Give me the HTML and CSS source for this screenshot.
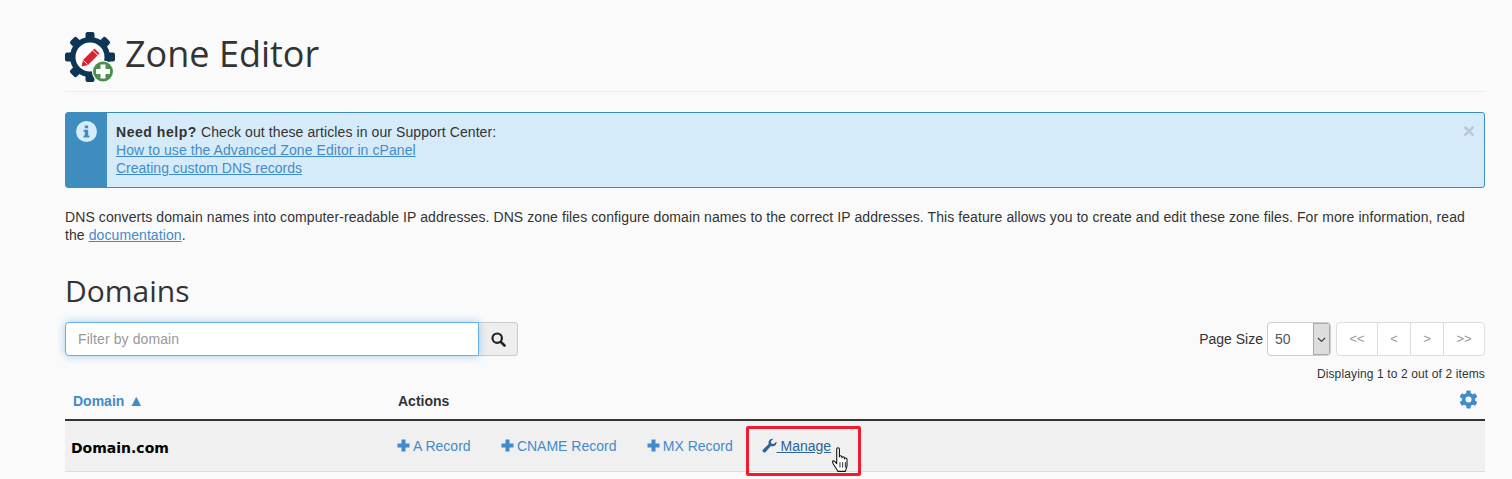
FILE: index.html
```html
<!DOCTYPE html>
<html lang="en">
<head>
    <meta charset="UTF-8">
    <title>Zone Editor</title>
    <link rel="stylesheet" href="styles.css">
</head>
<body>
    <div class="page">
        <div class="pageHead">
            <svg class="appIcon" width="50" height="52" viewBox="0 0 50 52">
                <g fill="#0f3555">
                    <circle cx="25" cy="25" r="20"/>
                    <rect x="20.500" y="0" width="9" height="9" rx="2"/>
                    <rect x="20.500" y="41" width="9" height="9" rx="2"/>
                    <rect x="0" y="20.500" width="9" height="9" rx="2"/>
                    <rect x="41" y="20.500" width="9" height="9" rx="2"/>
                    <rect x="20.500" y="0" width="9" height="9" rx="2" transform="rotate(45 25 25)"/>
                    <rect x="20.500" y="41" width="9" height="9" rx="2" transform="rotate(45 25 25)"/>
                    <rect x="0" y="20.500" width="9" height="9" rx="2" transform="rotate(45 25 25)"/>
                    <rect x="41" y="20.500" width="9" height="9" rx="2" transform="rotate(45 25 25)"/>
                </g>
                <circle cx="25" cy="25" r="14.500" fill="#fff"/>
                <path d="M16.500 34.500l1.500-6.500L29.500 16.500l5 5L23 33z" fill="#d9232e"/>
                <path d="M27.800 18.300l5 5" stroke="#fff" stroke-width="1" fill="none"/>
                <path d="M18.500 28.500l4 4" stroke="#fff" stroke-width="1" fill="none"/>
                <circle cx="38" cy="39.500" r="11" fill="#fff"/>
                <circle cx="38" cy="39.500" r="10" fill="#4a8f4c"/>
                <path d="M35.500 32.500h5v4.500H45v5h-4.500v4.500h-5V42H31v-5h4.500z" fill="#fff"/>
            </svg>
            <h1 class="pageTitle">Zone Editor</h1>
        </div>

        <div class="alert">
            <div class="alertSide">
                <svg width="21" height="21" viewBox="0 0 21 21">
                    <circle cx="10.500" cy="10.500" r="10.500" fill="#d6ecfa"/>
                    <rect x="8.800" y="4.500" width="3.400" height="2.800" fill="#3f8dbf"/>
                    <path d="M7.500 8.800h4.700v5.600h1.300v2H7.500v-2h1.300v-3.600H7.500z" fill="#3f8dbf"/>
                </svg>
            </div>
            <div class="alertBody">
                <div class="alertLead"><b>Need help?</b> Check out these articles in our Support Center:</div>
                <div class="alertLink"><a href="#">How to use the Advanced Zone Editor in cPanel</a></div>
                <div><a href="#">Creating custom DNS records</a></div>
            </div>
            <span class="alertClose">&#215;</span>
        </div>

        <p class="desc">DNS converts domain names into computer-readable IP addresses. DNS zone files configure domain names to the correct IP addresses. This feature allows you to create and edit these zone files. For more information, read the <a href="#">documentation</a>.</p>

        <h2 class="secTitle">Domains</h2>

        <div class="toolbar">
            <div class="searchGroup">
                <input class="searchInput" type="text" placeholder="Filter by domain">
                <button type="button" class="searchBtn">
                    <svg width="15" height="15" viewBox="0 0 15 15">
                        <circle cx="6.200" cy="6.200" r="4.700" fill="none" stroke="#222" stroke-width="2.200"/>
                        <path d="M9.800 9.800l3.700 3.700" stroke="#222" stroke-width="2.600" stroke-linecap="round"/>
                    </svg>
                </button>
            </div>
            <div class="pager">
                <span class="pageSizeLbl">Page Size</span>
                <div class="sizeSelect">
                    <span class="sizeVal">50</span>
                    <span class="sizeArrow">
                        <svg width="9" height="6" viewBox="0 0 9 6"><path d="M1 1l3.500 3.500L8 1" fill="none" stroke="#444" stroke-width="1.200"/></svg>
                    </span>
                </div>
                <div class="pageBtns">
                    <span class="pageBtn first">&lt;&lt;</span>
                    <span class="pageBtn prev">&lt;</span>
                    <span class="pageBtn next">&gt;</span>
                    <span class="pageBtn last">&gt;&gt;</span>
                </div>
            </div>
        </div>
        <div class="displaying">Displaying 1 to 2 out of 2 items</div>

        <div class="tblHead">
            <div class="colDomain"><a href="#" class="sortLink">Domain <span class="sortArrow">&#9650;</span></a></div>
            <div class="colActions">Actions</div>
            <svg class="gear" width="19" height="19" viewBox="0 0 19 19">
                <g fill="#428bca">
                    <circle cx="9.500" cy="9.500" r="6.700"/>
                    <rect x="7.300" y="0.500" width="4.400" height="18" rx="1"/>
                    <rect x="7.300" y="0.500" width="4.400" height="18" rx="1" transform="rotate(60 9.500 9.500)"/>
                    <rect x="7.300" y="0.500" width="4.400" height="18" rx="1" transform="rotate(120 9.500 9.500)"/>
                </g>
                <circle cx="9.500" cy="9.500" r="3" fill="#fafafa"/>
            </svg>
        </div>
        <div class="tblRow">
            <div class="colDomain domainName">Domain.com</div>
            <div class="colActions rowActions">
                <a href="#" class="action"><svg class="plus" width="13" height="13" viewBox="0 0 13 13"><path d="M4.500 0.500h4v4h4v4h-4v4h-4v-4h-4v-4h4z" fill="#428bca"/></svg>A Record</a>
                <a href="#" class="action"><svg class="plus" width="13" height="13" viewBox="0 0 13 13"><path d="M4.500 0.500h4v4h4v4h-4v4h-4v-4h-4v-4h4z" fill="#428bca"/></svg>CNAME Record</a>
                <a href="#" class="action"><svg class="plus" width="13" height="13" viewBox="0 0 13 13"><path d="M4.500 0.500h4v4h4v4h-4v4h-4v-4h-4v-4h4z" fill="#428bca"/></svg>MX Record</a>
                <a href="#" class="action manage"><svg class="wrench" width="15" height="15" viewBox="0 0 15 15"><path d="M14.500 3.500a4.200 4.200 0 0 1-5.600 4.600L3.600 13.900a1.700 1.700 0 0 1-2.500-2.400L6.700 6.100A4.200 4.200 0 0 1 11.400 0.700L8.900 3.200l0.400 2.400 2.400 0.400z" fill="#2a6496"/></svg> Manage</a>
            </div>
        </div>
    </div>

    <div class="redBox"></div>
    <svg class="cursor" width="19" height="26" viewBox="0 0 17 24">
        <path d="M5 2c0-1.700 2.500-1.700 2.500 0v7c0-1.300 2.300-1.300 2.300 0v1c0-1.300 2.300-1.300 2.300 0v1c0-1.200 2.400-1.200 2.400 0.200v5.800c0 2-1 3.300-1.500 5.500H6c-.7-2-2-3.300-4-6.500-1.200-2-1-3.200 0-3.200.8 0 2 1.200 3 2.500z" fill="#fff" stroke="#111" stroke-width="1" stroke-linejoin="round"/>
        <path d="M8 14v5M10.500 14v5M13 14v5" stroke="#111" stroke-width="0.800"/>
    </svg>
</body>
</html>
```

FILE: styles.css
```css
*{
    box-sizing: border-box;
}
html,body{
    height: 479px;
    overflow: hidden;
}
body{
    margin: 0;
    background: #fafafa;
    color: #333;
    font-family: "Liberation Sans", Arial, sans-serif;
    font-size: 14px;
    line-height: 18px;
    position: relative;
}
a{
    color: #428bca;
}
.page{
    padding: 27px 27px 0 65px;
}
.pageHead{
    display: flex;
    align-items: flex-start;
    gap: 10px;
    height: 65px;
    border-bottom: 1px solid #eee;
}
.appIcon{
    flex: none;
    margin-top: 5px;
}
.pageTitle{
    margin: 0;
    font-family: "Open Sans", sans-serif;
    font-size: 36px;
    font-weight: 400;
    line-height: 54px;
}
.alert{
    position: relative;
    display: flex;
    height: 76px;
    margin-top: 20px;
    background: #d6ebfa;
    border: 1px solid #3f8dbf;
    border-radius: 3px;
}
.alertSide{
    width: 41px;
    background: #3f8dbf;
    padding: 8px 1px 0 0;
    text-align: center;
}
.alertBody{
    padding: 10px 0 0 9px;
}
.alertLead{
    letter-spacing: .09px;
}
.alertLead b{
    letter-spacing: .55px;
}
.alertLink{
    letter-spacing: .07px;
}
.alertClose{
    position: absolute;
    right: 9px;
    top: 8px;
    color: #b6c9d6;
    font-size: 21px;
    font-weight: bold;
    line-height: 20px;
}
.desc{
    margin: 20px 0 0;
    letter-spacing: .086px;
}
.secTitle{
    margin: 26px 0 0;
    font-family: "Open Sans", sans-serif;
    font-size: 30px;
    font-weight: 400;
    line-height: 42px;
}
.toolbar{
    display: flex;
    justify-content: space-between;
    margin-top: 10px;
}
.searchGroup{
    display: flex;
    width: 453px;
    height: 34px;
}
.searchInput{
    flex: 1;
    min-width: 0;
    padding: 0 12px;
    font: inherit;
    letter-spacing: .1px;
    color: #555;
    background: #fff;
    border: 1px solid #66afe9;
    border-radius: 4px 0 0 4px;
    box-shadow: 0 0 8px rgba(102,175,233,.6);
    outline: none;
    position: relative;
}
.searchInput::placeholder{
    color: #999;
}
.searchBtn{
    width: 39px;
    padding: 3px 0 0;
    background: #eee;
    border: 1px solid #ccc;
    border-left: 0;
    border-radius: 0 4px 4px 0;
}
.pager{
    display: flex;
    align-items: center;
}
.pageSizeLbl{
    margin-right: 4px;
}
.sizeSelect{
    display: flex;
    width: 64px;
    height: 34px;
    background: #fff;
    border: 1px solid #ccc;
    border-radius: 4px;
    overflow: hidden;
}
.sizeVal{
    flex: 1;
    padding: 7px 0 0 7px;
    color: #555;
}
.sizeArrow{
    width: 17px;
    background: #ddd;
    border: 1px solid #aaa;
    text-align: center;
    line-height: 28px;
}
.pageBtns{
    display: flex;
    height: 34px;
    margin-left: 5px;
    background: #fff;
    border: 1px solid #ddd;
    border-radius: 4px;
}
.pageBtn{
    display: flex;
    align-items: center;
    justify-content: center;
    color: #999;
    font-size: 13px;
    border-left: 1px solid #ddd;
}
.first{
    width: 40px;
    border-left: 0;
}
.prev,.next{
    width: 33px;
}
.last{
    width: 41px;
}
.displaying{
    margin-top: 9px;
    font-size: 12px;
    letter-spacing: .125px;
    line-height: 18px;
    text-align: right;
}
.tblHead{
    display: flex;
    align-items: center;
    height: 38px;
    padding-bottom: 1px;
    border-bottom: 2px solid #333;
    font-weight: bold;
    position: relative;
}
.colDomain{
    width: 325px;
    padding-left: 8px;
}
.colActions{
    flex: 1;
    padding-left: 8px;
}
.sortLink{
    text-decoration: none;
}
.sortArrow{
    font-size: 16px;
}
.gear{
    position: absolute;
    right: 7px;
    top: 7px;
}
.tblRow{
    display: flex;
    align-items: center;
    height: 51px;
    background: #f0f0f0;
    border-bottom: 1px solid #ddd;
}
.domainName{
    padding: 3px 0 0 6px;
    color: #000;
    font-family: "DejaVu Sans", sans-serif;
    font-size: 14px;
    font-weight: bold;
}
.rowActions{
    display: flex;
    gap: 30.300px;
    padding: 0 0 1px 7px;
}
.action{
    display: flex;
    align-items: center;
    text-decoration: none;
    white-space: pre;
}
.plus{
    margin-right: 3px;
}
.manage{
    margin-left: -1.500px;
    color: #2a6496;
    text-decoration: underline;
}
.redBox{
    position: absolute;
    left: 746px;
    top: 426px;
    width: 115px;
    height: 50px;
    border: 3px solid #ed1c2e;
    border-radius: 2px;
}
.cursor{
    position: absolute;
    left: 831px;
    top: 447px;
}
```
